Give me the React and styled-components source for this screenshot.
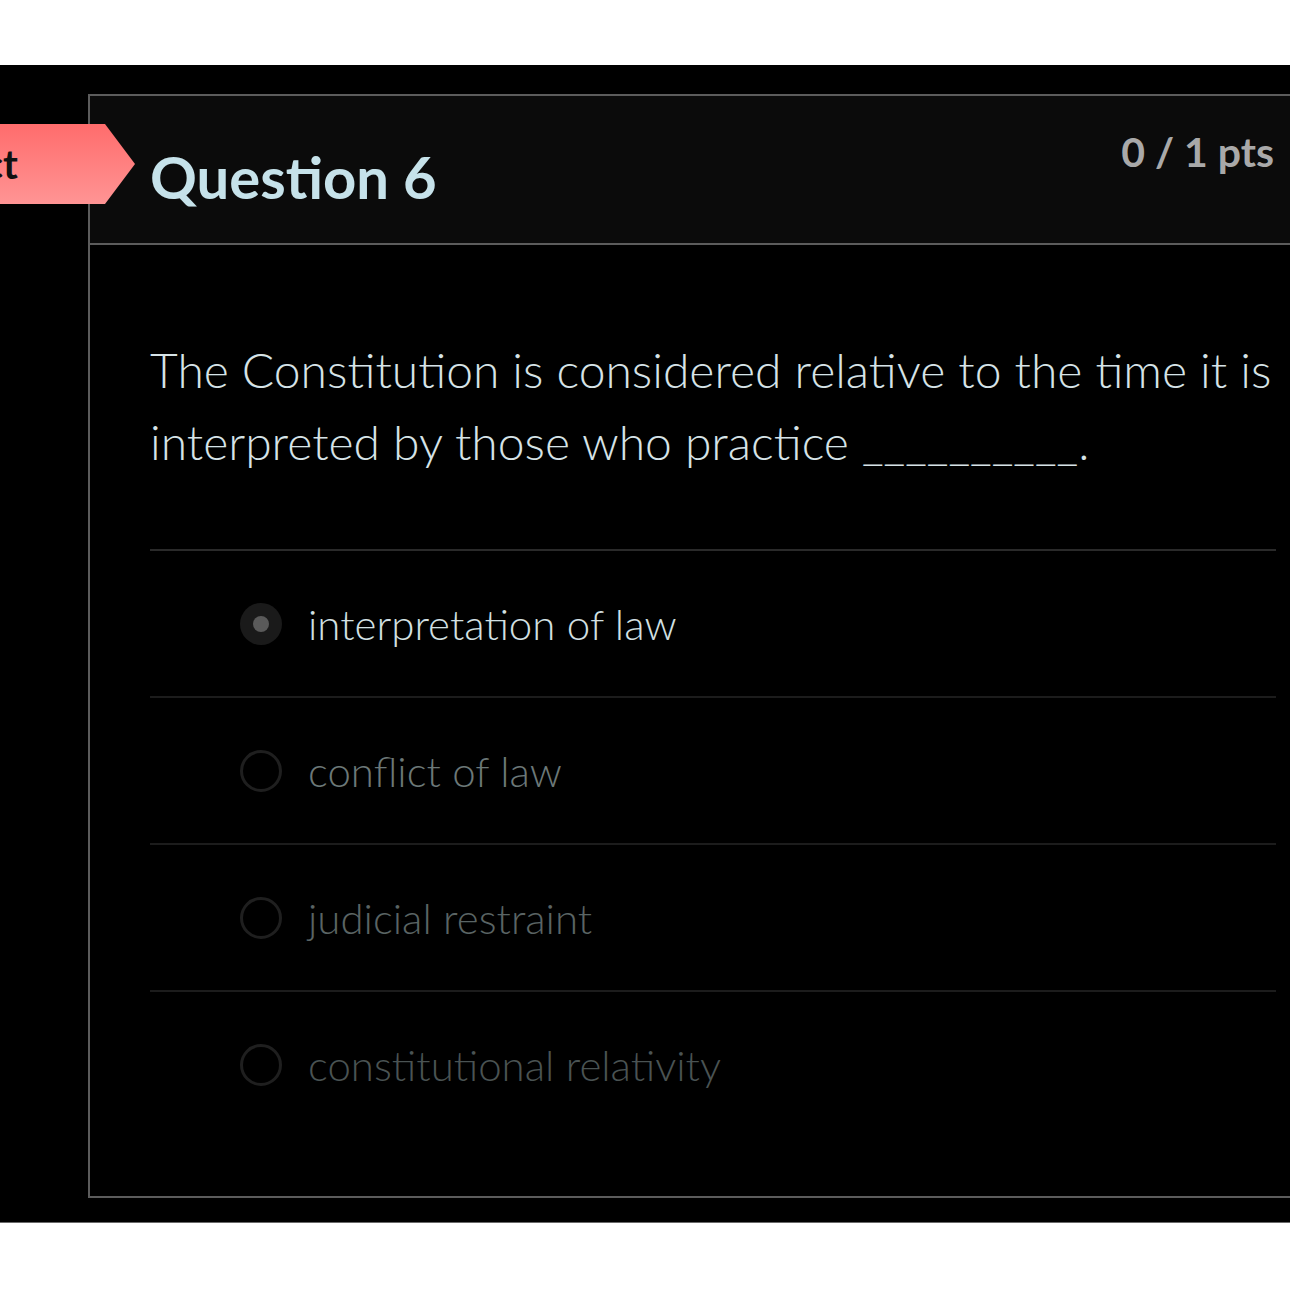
import React from 'react';
import styled, { createGlobalStyle } from 'styled-components';

const GlobalStyle = createGlobalStyle`
  html, body {
    margin: 0;
    padding: 0;
    background: #ffffff;
    font-family: Lato, "Open Sans", sans-serif;
  }
  body {
    overflow: hidden;
  }
`;

const Page = styled.div`
  width: 1290px;
  height: 1290px;
  background: #ffffff;
  padding-top: 65px;
  box-sizing: border-box;
  overflow: hidden;
`;

const Stage = styled.div`
  position: relative;
  height: 1158px;
  background: #000000;
  border-bottom: 1px solid #6a6a6a;
  padding-top: 29px;
  padding-left: 88px;
  box-sizing: border-box;
  overflow: hidden;
`;

const Badge = styled.div`
  position: absolute;
  top: 59px;
  left: -120px;
  width: 255px;
  height: 80px;
  display: flex;
  align-items: center;
  justify-content: flex-end;
  padding-right: 117px;
  box-sizing: border-box;
  background: linear-gradient(180deg, #ff6c6c 0%, #ff9494 100%);
  clip-path: polygon(0 0, 225px 0, 255px 50%, 225px 100%, 0 100%);
  color: #111;
  font-weight: 700;
  font-size: 40px;
  z-index: 2;
`;

const Card = styled.div`
  width: 1260px;
  border: 2px solid #5c5c5c;
  border-right: none;
  height: 1104px;
  box-sizing: border-box;
  background: #000;
`;

const Header = styled.div`
  height: 147px;
  background: #0b0b0b;
  border-bottom: 2px solid #5c5c5c;
  display: flex;
  justify-content: space-between;
  align-items: flex-start;
  padding: 0 74px 0 60px;
`;

const Title = styled.h2`
  margin: 0;
  padding-top: 46px;
  font-size: 58px;
  font-weight: 700;
  color: #c6e2ea;
  line-height: 1.2;
`;

const Points = styled.div`
  padding-top: 31px;
  font-size: 41px;
  font-weight: 700;
  color: #a9a9a9;
  line-height: 1.2;
`;

const Body = styled.div`
  padding: 89px 0 0 60px;
  width: 1126px;
`;

const Prompt = styled.p`
  margin: 0;
  font-size: 48px;
  font-weight: 300;
  line-height: 72px;
  color: #d6e3e7;
  padding-bottom: 71px;
  border-bottom: 2px solid #2a2a2a;
`;

const Option = styled.label`
  display: flex;
  align-items: center;
  height: 145px;
  padding-left: 90px;
  border-bottom: ${p => (p.$last ? 'none' : '2px solid #1c1c1c')};
  color: ${p => p.$color};
  font-size: 42px;
  font-weight: 300;
  gap: 26px;
`;

const Radio = styled.span`
  width: 42px;
  height: 42px;
  border-radius: 50%;
  box-sizing: border-box;
  flex-shrink: 0;
  display: flex;
  align-items: center;
  justify-content: center;
  background: ${p => (p.$checked ? '#1a1a1a' : 'transparent')};
  border: ${p => (p.$checked ? 'none' : '3px solid #1f1f1f')};

  &::after {
    content: '';
    display: ${p => (p.$checked ? 'block' : 'none')};
    width: 16px;
    height: 16px;
    border-radius: 50%;
    background: #5a5a5a;
  }
`;

const answers = [
  { text: 'interpretation of law', color: '#d3e0e3', checked: true },
  { text: 'conflict of law', color: '#6c7878' },
  { text: 'judicial restraint', color: '#5a6464' },
  { text: 'constitutional relativity', color: '#4a5353' },
];

export default function App() {
  return (
    <Page>
      <GlobalStyle />
      <Stage>
        <Badge>Incorrect</Badge>
        <Card>
          <Header>
            <Title>Question 6</Title>
            <Points>0 / 1 pts</Points>
          </Header>
          <Body>
            <Prompt>
              The Constitution is considered relative to the time it is
              interpreted by those who practice __________.
            </Prompt>
            {answers.map((a, i) => (
              <Option key={a.text} $color={a.color} $last={i === answers.length - 1}>
                <Radio $checked={a.checked} />
                {a.text}
              </Option>
            ))}
          </Body>
        </Card>
      </Stage>
    </Page>
  );
}
